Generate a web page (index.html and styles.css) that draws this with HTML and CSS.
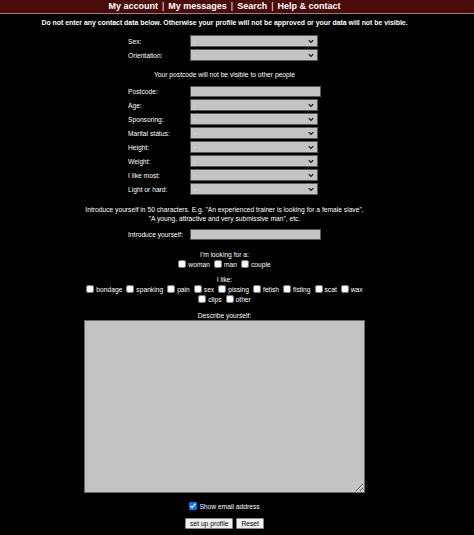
FILE: index.html
```html
<!DOCTYPE html>
<html lang="en">
<head>
<meta charset="utf-8">
<title>Set up profile</title>
<link rel="stylesheet" href="styles.css">
</head>
<body>
<nav class="topnav">
  <a href="#">My account</a><span class="sep">|</span><a href="#">My messages</a><span class="sep">|</span><a href="#">Search</a><span class="sep">|</span><a href="#">Help &amp; contact</a>
</nav>
<form class="main">
  <p class="warn">Do not enter any contact data below. Otherwise your profile will not be approved or your data will not be visible.</p>

  <div class="fields first">
    <label>Sex:</label><select><option>-</option></select>
    <label>Orientation:</label><select><option>-</option></select>
  </div>

  <p class="note">Your postcode will not be visible to other people</p>

  <div class="fields second">
    <label>Postcode:</label><input type="text" class="txt">
    <label>Age:</label><select><option>-</option></select>
    <label>Sponsoring:</label><select><option>-</option></select>
    <label>Marital status:</label><select><option>-</option></select>
    <label>Height:</label><select><option>-</option></select>
    <label>Weight:</label><select><option>-</option></select>
    <label>I like most:</label><select><option>-</option></select>
    <label>Light or hard:</label><select><option>-</option></select>
  </div>

  <p class="intro">Introduce yourself in 50 characters. E.g. "An experienced trainer is looking for a female slave",<br>"A young, attractive and very submissive man", etc.</p>

  <div class="fields third">
    <label>Introduce yourself:</label><input type="text" class="txt">
  </div>

  <p class="head">I'm looking for a:</p>
  <div class="checks">
    <label><input type="checkbox">woman</label>
    <label><input type="checkbox">man</label>
    <label><input type="checkbox">couple</label>
  </div>

  <p class="head like">I like:</p>
  <div class="checks">
    <label><input type="checkbox">bondage</label>
    <label><input type="checkbox">spanking</label>
    <label><input type="checkbox">pain</label>
    <label><input type="checkbox">sex</label>
    <label><input type="checkbox">pissing</label>
    <label><input type="checkbox">fetish</label>
    <label><input type="checkbox">fisting</label>
    <label><input type="checkbox">scat</label>
    <label><input type="checkbox">wax</label>
  </div>
  <div class="checks">
    <label><input type="checkbox">clips</label>
    <label><input type="checkbox">other</label>
  </div>

  <p class="head describe">Describe yourself:</p>
  <textarea class="desc"></textarea>

  <div class="checks email">
    <label><input type="checkbox" checked>Show email address</label>
  </div>

  <div class="buttons">
    <button type="submit">set up profile</button>
    <button type="reset">Reset</button>
  </div>
</form>
</body>
</html>
```
FILE: styles.css
```css
html, body {
  margin: 0;
  padding: 0;
  background: #000;
  color: #fff;
  font-family: "Liberation Sans", Arial, sans-serif;
}

.topnav {
  display: flex;
  justify-content: center;
  align-items: center;
  width: 449px;
  height: 13px;
  padding-right: 25px;
  background: #4b0b0b;
  border-bottom: 1px solid #a07c7c;
  font-size: 9px;
  font-weight: bold;
  line-height: 13px;
}

.topnav a {
  color: #fff;
  text-decoration: none;
}

.topnav .sep {
  margin: 0 4px;
  font-weight: normal;
}

.main {
  width: 449px;
  display: flex;
  flex-direction: column;
  align-items: center;
  font-size: 6.7px;
  line-height: 9px;
}

.main p {
  margin: 0;
  text-align: center;
}

.main .warn {
  font-weight: bold;
  margin-top: 4px;
  font-size: 6.9px;
}

.fields {
  display: grid;
  grid-template-columns: 62px 131px;
  grid-auto-rows: 12px;
  row-gap: 2px;
  align-items: center;
  margin-top: 8px;
}

.fields.second {
  margin-top: 6px;
}

.fields.third {
  margin-top: 5px;
}

.fields label {
  text-align: left;
}

.fields select {
  -webkit-appearance: none;
  appearance: none;
  width: 128px;
  height: 12px;
  padding: 0 0 0 3px;
  margin: 0;
  font-family: inherit;
  font-size: 7px;
  line-height: 10px;
  color: #f2f2f2;
  background-color: #c3c3c3;
  background-image: url("data:image/svg+xml,%3Csvg xmlns='http://www.w3.org/2000/svg' width='8' height='6' viewBox='0 0 8 6'%3E%3Cpath d='M1 1.2 L4 4.2 L7 1.2' fill='none' stroke='%23111' stroke-width='1.6'/%3E%3C/svg%3E");
  background-repeat: no-repeat;
  background-position: right 3px center;
  background-size: 6px 5px;
  border: 1px solid #5a5a5a;
  border-radius: 0;
}

.fields .txt {
  width: 131px;
  height: 11px;
  box-sizing: border-box;
  padding: 0;
  margin: 0;
  background: #c3c3c3;
  border: 1px solid #5a5a5a;
}

.main .note {
  margin-top: 9px;
}

.main .intro {
  margin-top: 10px;
}

.main .head {
  margin-top: 10px;
}

.main .head.like {
  margin-top: 6px;
}

.main .head.describe {
  margin-top: 7px;
}

.checks {
  display: flex;
  justify-content: center;
  flex-wrap: wrap;
  gap: 0 4px;
  height: 10px;
  align-items: center;
}

.checks label {
  display: flex;
  align-items: center;
}

.checks input {
  width: 8px;
  height: 8px;
  margin: 0 2px 0 0;
}

.desc {
  width: 281px;
  height: 173px;
  box-sizing: border-box;
  margin: 0;
  background: #c3c3c3;
  border: 1px solid #6a6a6a;
  border-radius: 0;
}

.checks.email {
  margin-top: 8px;
}

.buttons {
  display: flex;
  gap: 3px;
  margin-top: 7px;
}

.buttons button {
  font: inherit;
  font-size: 6.7px;
  height: 11px;
  padding: 0 4px;
  background: #f0f0f0;
  color: #000;
  border: 1px solid #888;
  border-radius: 1px;
  line-height: 9px;
}
```
